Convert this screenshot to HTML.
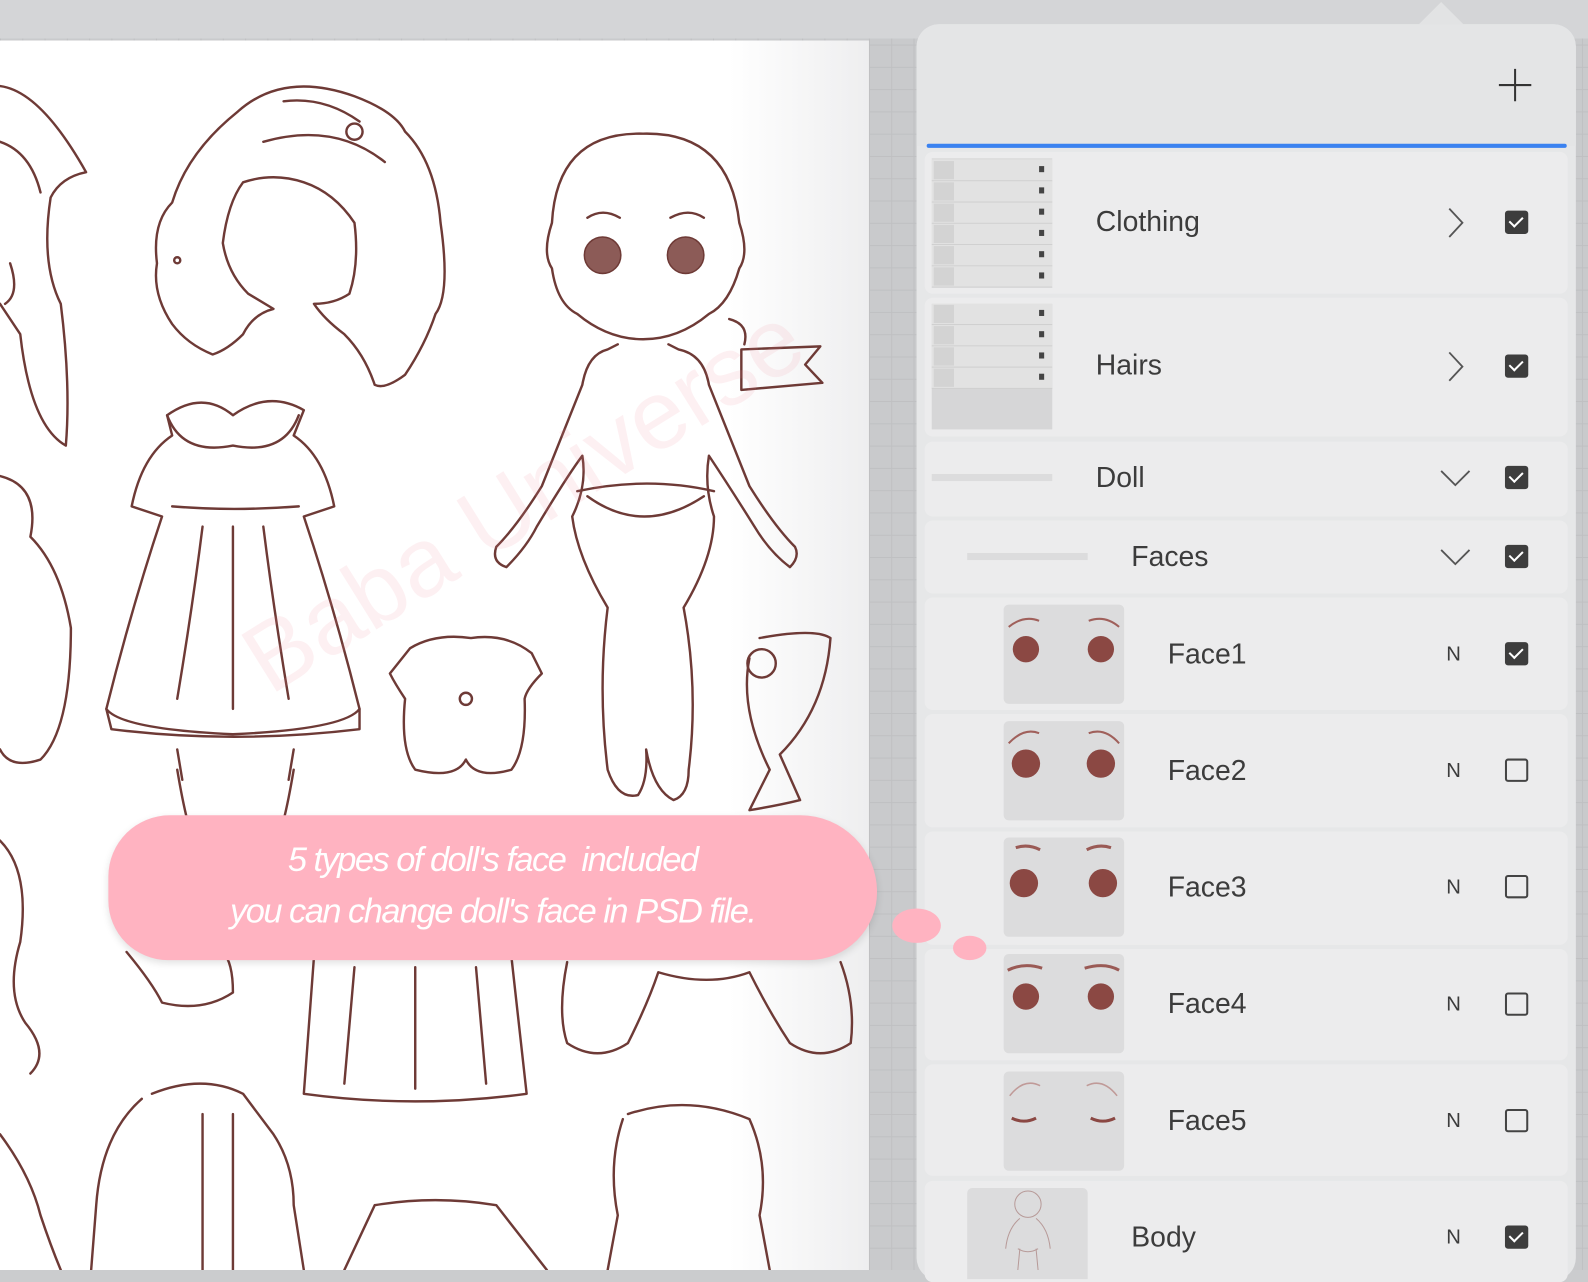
<!DOCTYPE html>
<html><head><meta charset="utf-8">
<style>
html,body{margin:0;padding:0;width:1588px;height:1270px;overflow:hidden;background:#cbccce;}
#w{position:absolute;left:0;top:0;width:1568px;height:1254px;transform:scale(1.01276);transform-origin:0 0;font-family:"Liberation Sans",sans-serif;}
.bg{position:absolute;inset:0;background-color:#c9cacc;
background-image:linear-gradient(#bfc0c2 1px,transparent 1px),linear-gradient(90deg,#bfc0c2 1px,transparent 1px);background-size:22px 22px;}
.top{position:absolute;left:0;top:0;width:1568px;height:38px;background:#d4d5d7;}
.paper{position:absolute;left:0;top:40px;width:858px;height:1214px;background:linear-gradient(90deg,#fff 0,#fff 720px,#eeeeef 858px);}
.panel{position:absolute;left:905px;top:24px;width:651px;height:1240px;background:#e6e7e8;border-radius:22px;}
.arrow{position:absolute;left:1401px;top:2px;width:0;height:0;border-left:22px solid transparent;border-right:22px solid transparent;border-bottom:22px solid #e2e3e4;}
.hdr{position:absolute;left:905px;top:24px;width:651px;height:120px;background:#e4e5e6;border-radius:22px 22px 0 0;}
.blue{position:absolute;left:915px;top:142px;width:632px;height:4px;background:#3b82f0;border-radius:2px;}
.row{position:absolute;left:913px;width:635px;background:#ececed;border-radius:8px;}
.lbl{position:absolute;font-size:28px;color:#3c3c3c;}
.cb{position:absolute;left:1486px;width:23px;height:23px;border-radius:3px;box-sizing:border-box;}
.cb.on{background:#3d3d3d;}
.cb.off{border:2px solid #444;}
.cb.on::after{content:"";position:absolute;left:7px;top:3px;width:6px;height:11px;border:solid #fff;border-width:0 2.5px 2.5px 0;transform:rotate(45deg);}
.N{position:absolute;left:1428px;font-size:20px;color:#3c3c3c;}
.thumb{position:absolute;background:#dcdcdd;border-radius:5px;}
.chev{position:absolute;}
.bubble{position:absolute;left:107px;top:805px;width:759px;height:143px;background:#ffb3c1;border-radius:72px 90px 80px 70px;box-shadow:0 3px 8px rgba(0,0,0,.12);}
.bt{position:absolute;left:107px;width:759px;text-align:center;color:#fff;font-style:italic;font-size:34px;letter-spacing:-1.5px;font-family:"Liberation Sans Narrow","Liberation Sans",sans-serif;}
.dot{position:absolute;background:#ffb3c1;border-radius:50%;}
.mr{position:absolute;left:920px;width:119px;height:20px;border-bottom:1px solid #cfcfcf;background:#e2e2e2;}
.mr i{position:absolute;left:2px;top:1px;width:20px;height:18px;background:#d3d3d3;}
.mr b{position:absolute;left:106px;top:6px;width:5px;height:6px;background:#444;}
</style></head><body><div id="w">
<div class="bg"></div><div class="top"></div>
<div class="paper"></div>
<svg style="position:absolute;left:0;top:0" width="870" height="1254" fill="none" stroke="#6e3a36" stroke-width="2.4" stroke-linecap="round" stroke-linejoin="round">
<path d="M0 85 Q40 90 85 170 Q60 175 50 195 Q40 260 60 300 Q70 380 65 440 Q30 420 20 330 Q0 300 0 300"/>
<path d="M0 140 Q30 150 40 190 M10 260 Q20 290 5 300"/>
<path d="M0 470 Q40 480 30 530 Q60 560 70 620 Q70 720 40 750 Q10 760 0 740"/>
<path d="M0 830 Q30 860 20 930 Q5 980 25 1010 Q50 1040 30 1060"/>
<path d="M235 110 Q280 70 350 95 Q390 110 400 130 Q430 160 435 220 Q445 290 430 310 Q420 340 400 370 Q380 385 370 380 Q360 350 340 330 Q320 315 310 300 Q330 300 345 290 Q355 260 350 220 Q330 190 300 180 Q270 170 240 180 Q225 200 220 240 Q225 270 245 290 Q270 305 270 305 Q250 310 240 330 Q225 345 210 350 Q185 340 170 320 Q150 290 155 260 Q150 220 170 200 Q185 150 235 110Z"/>
<path d="M260 140 Q330 120 380 160 M280 100 Q320 95 355 120"/>
<circle cx="350" cy="130" r="8"/><circle cx="175" cy="257" r="3"/>
<path d="M165 410 Q200 385 230 410 Q265 385 300 405 L290 430 Q320 450 330 500 L300 510 Q330 600 355 700 Q340 720 230 725 Q120 720 105 700 Q130 600 160 510 L130 500 Q140 450 170 430Z"/>
<path d="M165 410 Q180 450 230 440 Q280 450 295 410 M170 500 Q230 505 295 500 M105 700 L110 720 Q230 735 355 720 L355 700"/>
<path d="M200 520 Q190 600 175 690 M230 520 L230 700 M260 520 Q270 600 285 690"/>
<path d="M175 760 Q180 790 185 810 M290 760 Q285 790 280 810 M175 740 L180 770 M290 740 L285 770"/>
<path d="M405 640 Q430 625 465 630 Q500 625 525 645 L535 665 Q520 680 518 690 Q520 740 505 760 Q470 770 460 750 Q450 770 410 760 Q395 740 400 690 Q390 675 385 665Z"/>
<circle cx="460" cy="690" r="6"/>
<path d="M635 132 Q720 130 730 220 Q740 250 730 265 Q720 300 700 310 Q670 335 635 335 Q600 335 570 310 Q550 300 545 265 Q535 250 545 220 Q550 130 635 132Z"/>
<path d="M610 340 L600 345 Q580 350 575 380 Q555 430 535 480 Q510 520 490 540 Q485 555 500 560 Q520 540 530 520 Q560 470 575 450 Q580 480 565 510 Q570 550 600 600 Q590 680 600 760 Q610 790 630 785 Q640 770 638 740 Q645 780 665 790 Q680 785 680 760 Q690 680 675 600 Q705 550 705 510 Q695 480 700 450 Q720 480 745 520 Q760 545 780 560 Q790 550 785 540 Q765 520 740 480 Q720 430 700 380 Q695 350 670 345 L660 340"/>
<path d="M570 485 Q640 470 705 485 M580 490 Q635 530 695 490"/>
<ellipse cx="595" cy="252" rx="18" ry="18" fill="#8c5b57" stroke-width="1.5"/>
<ellipse cx="677" cy="252" rx="18" ry="18" fill="#8c5b57" stroke-width="1.5"/>
<path d="M580 215 Q595 205 612 215 M662 215 Q680 205 695 215"/>
<path d="M732 345 L810 342 L795 360 L812 378 L732 385Z M720 315 Q740 320 735 340"/>
<path d="M750 630 Q805 620 820 630 Q815 700 770 745 L790 790 Q770 795 740 800 L760 760 Q730 700 740 650"/>
<circle cx="752" cy="655" r="14"/>
<path d="M125 940 Q150 970 160 990 Q200 1000 230 980 Q230 950 220 940"/>
<path d="M310 945 L300 1080 Q410 1095 520 1080 L505 945 M350 955 L340 1070 M410 955 L410 1075 M470 955 L480 1070"/>
<path d="M560 950 Q550 1000 560 1030 Q590 1050 620 1030 Q640 990 650 960 Q700 975 740 960 Q760 1000 780 1030 Q810 1050 840 1030 Q845 990 830 950"/>
<path d="M150 1080 Q200 1060 240 1080 L270 1120 Q290 1150 290 1190 L300 1254 M140 1085 Q100 1120 95 1190 L90 1254"/>
<path d="M200 1100 L200 1254 M230 1100 L230 1254"/>
<path d="M620 1100 Q680 1080 740 1105 Q760 1150 750 1200 L760 1254 M615 1105 Q600 1150 610 1200 L600 1254"/>
<path d="M370 1190 Q430 1180 490 1190 L540 1254 M370 1190 L340 1254"/>
<path d="M0 1120 Q30 1160 40 1200 Q50 1230 60 1254"/>
</svg>
<svg style="position:absolute;left:0;top:0;opacity:.12" width="870" height="1254"><text x="150" y="560" transform="rotate(-32 430 420)" font-family="Liberation Sans" font-size="96" fill="#f08a9a">Baba Universe</text></svg>

<div class="bubble"></div>
<div class="bt" style="top:830px">5 types of doll's face &nbsp;included</div>
<div class="bt" style="top:881px">you can change doll's face in PSD file.</div>

<div class="arrow"></div>
<div class="panel"></div>
<div class="hdr"></div>
<svg style="position:absolute;left:1478px;top:66px" width="36" height="36"><path d="M18 2V34M2 18H34" stroke="#333" stroke-width="2"/></svg>
<div class="blue"></div>

<div class="row" style="top:150px;height:140px"></div>
<div class="thumb" style="left:920px;top:156px;width:119px;height:126px;background:#dedede;border-radius:0"></div>
<div class="mr" style="top:158px"><i></i><b></b></div>
<div class="mr" style="top:179px"><i></i><b></b></div>
<div class="mr" style="top:200px"><i></i><b></b></div>
<div class="mr" style="top:221px"><i></i><b></b></div>
<div class="mr" style="top:242px"><i></i><b></b></div>
<div class="mr" style="top:263px"><i></i><b></b></div>
<div class="lbl" style="left:1082px;top:203px">Clothing</div>
<svg class="chev" style="left:1428px;top:204px" width="20" height="32"><path d="M3 2L16 16L3 30" stroke="#555" stroke-width="1.8" fill="none"/></svg>
<div class="cb on" style="top:208px"></div>

<div class="row" style="top:294px;height:137px"></div>
<div class="thumb" style="left:920px;top:300px;width:119px;height:124px;background:#d6d6d7;border-radius:0"></div>
<div class="mr" style="top:300px"><i></i><b></b></div>
<div class="mr" style="top:321px"><i></i><b></b></div>
<div class="mr" style="top:342px"><i></i><b></b></div>
<div class="mr" style="top:363px"><i></i><b></b></div>
<div class="lbl" style="left:1082px;top:345px">Hairs</div>
<svg class="chev" style="left:1428px;top:346px" width="20" height="32"><path d="M3 2L16 16L3 30" stroke="#555" stroke-width="1.8" fill="none"/></svg>
<div class="cb on" style="top:350px"></div>

<div class="row" style="top:436px;height:74px"></div>
<div class="thumb" style="left:920px;top:468px;width:119px;height:7px;border-radius:0"></div>
<div class="lbl" style="left:1082px;top:456px">Doll</div>
<svg class="chev" style="left:1421px;top:462px" width="32" height="20"><path d="M2 3L16 17L30 3" stroke="#555" stroke-width="1.8" fill="none"/></svg>
<div class="cb on" style="top:460px"></div>

<div class="row" style="top:514px;height:72px"></div>
<div class="thumb" style="left:955px;top:546px;width:119px;height:7px;border-radius:0"></div>
<div class="lbl" style="left:1117px;top:534px">Faces</div>
<svg class="chev" style="left:1421px;top:540px" width="32" height="20"><path d="M2 3L16 17L30 3" stroke="#555" stroke-width="1.8" fill="none"/></svg>
<div class="cb on" style="top:538px"></div>

<div class="row" style="top:590px;height:111px"></div>
<div class="thumb" style="left:991px;top:597px;width:119px;height:98px"></div>
<svg style="position:absolute;left:991px;top:597px" width="119" height="98"><g fill="#8b4843"><circle cx="22" cy="44" r="13"/><circle cx="96" cy="44" r="13"/></g><g stroke="#a0605b" stroke-width="2" fill="none"><path d="M5 22Q20 10 35 16M84 16Q100 10 114 22"/></g></svg>
<div class="lbl" style="left:1153px;top:630px">Face1</div>
<div class="N" style="top:635px">N</div>
<div class="cb on" style="top:634px"></div>

<div class="row" style="top:705px;height:112px"></div>
<div class="thumb" style="left:991px;top:712px;width:119px;height:98px"></div>
<svg style="position:absolute;left:991px;top:712px" width="119" height="98"><g fill="#8b4843"><circle cx="22" cy="42" r="14"/><circle cx="96" cy="42" r="14"/></g><g stroke="#a0605b" stroke-width="2" fill="none"><path d="M5 22Q20 6 35 12M84 12Q100 6 114 22"/></g></svg>
<div class="lbl" style="left:1153px;top:745px">Face2</div>
<div class="N" style="top:750px">N</div>
<div class="cb off" style="top:749px"></div>

<div class="row" style="top:821px;height:112px"></div>
<div class="thumb" style="left:991px;top:827px;width:119px;height:98px"></div>
<svg style="position:absolute;left:991px;top:827px" width="119" height="98"><g fill="#8b4843"><circle cx="20" cy="45" r="14"/><circle cx="98" cy="45" r="14"/></g><g stroke="#9a5a55" stroke-width="3" fill="none"><path d="M12 10Q24 6 36 12M82 12Q94 6 106 10"/></g></svg>
<div class="lbl" style="left:1153px;top:860px">Face3</div>
<div class="N" style="top:865px">N</div>
<div class="cb off" style="top:864px"></div>

<div class="row" style="top:937px;height:110px"></div>
<div class="thumb" style="left:991px;top:942px;width:119px;height:98px"></div>
<svg style="position:absolute;left:991px;top:942px" width="119" height="98"><g fill="#8b4843"><circle cx="22" cy="42" r="13"/><circle cx="96" cy="42" r="13"/></g><g stroke="#9a5a55" stroke-width="3" fill="none"><path d="M4 16Q20 8 38 14M80 14Q100 8 114 16"/></g></svg>
<div class="lbl" style="left:1153px;top:975px">Face4</div>
<div class="N" style="top:981px">N</div>
<div class="cb off" style="top:980px"></div>

<div class="row" style="top:1051px;height:110px"></div>
<div class="thumb" style="left:991px;top:1058px;width:119px;height:98px"></div>
<svg style="position:absolute;left:991px;top:1058px" width="119" height="98"><g stroke="#8b4843" stroke-width="3" fill="none"><path d="M8 46Q20 52 32 46M86 46Q98 52 110 46"/></g><g stroke="#c09a98" stroke-width="1.5" fill="none"><path d="M6 24Q20 6 36 14M82 14Q98 6 112 24"/></g></svg>
<div class="lbl" style="left:1153px;top:1091px">Face5</div>
<div class="N" style="top:1096px">N</div>
<div class="cb off" style="top:1095px"></div>

<div class="row" style="top:1166px;height:100px"></div>
<div class="thumb" style="left:955px;top:1173px;width:119px;height:90px;border-radius:5px 5px 0 0"></div>
<svg style="position:absolute;left:955px;top:1173px" width="119" height="81"><g stroke="#b79a98" stroke-width="1" fill="none"><circle cx="60" cy="16" r="13"/><path d="M52 30Q40 40 38 60M68 30Q80 40 82 60M50 60Q60 66 70 60M52 60L50 81M68 60L70 81"/></g></svg>
<div class="lbl" style="left:1117px;top:1206px">Body</div>
<div class="N" style="top:1211px">N</div>
<div class="cb on" style="top:1210px"></div>

<div class="dot" style="left:881px;top:897px;width:48px;height:34px;"></div>
<div class="dot" style="left:941px;top:924px;width:33px;height:24px;"></div>
</div></body></html>
